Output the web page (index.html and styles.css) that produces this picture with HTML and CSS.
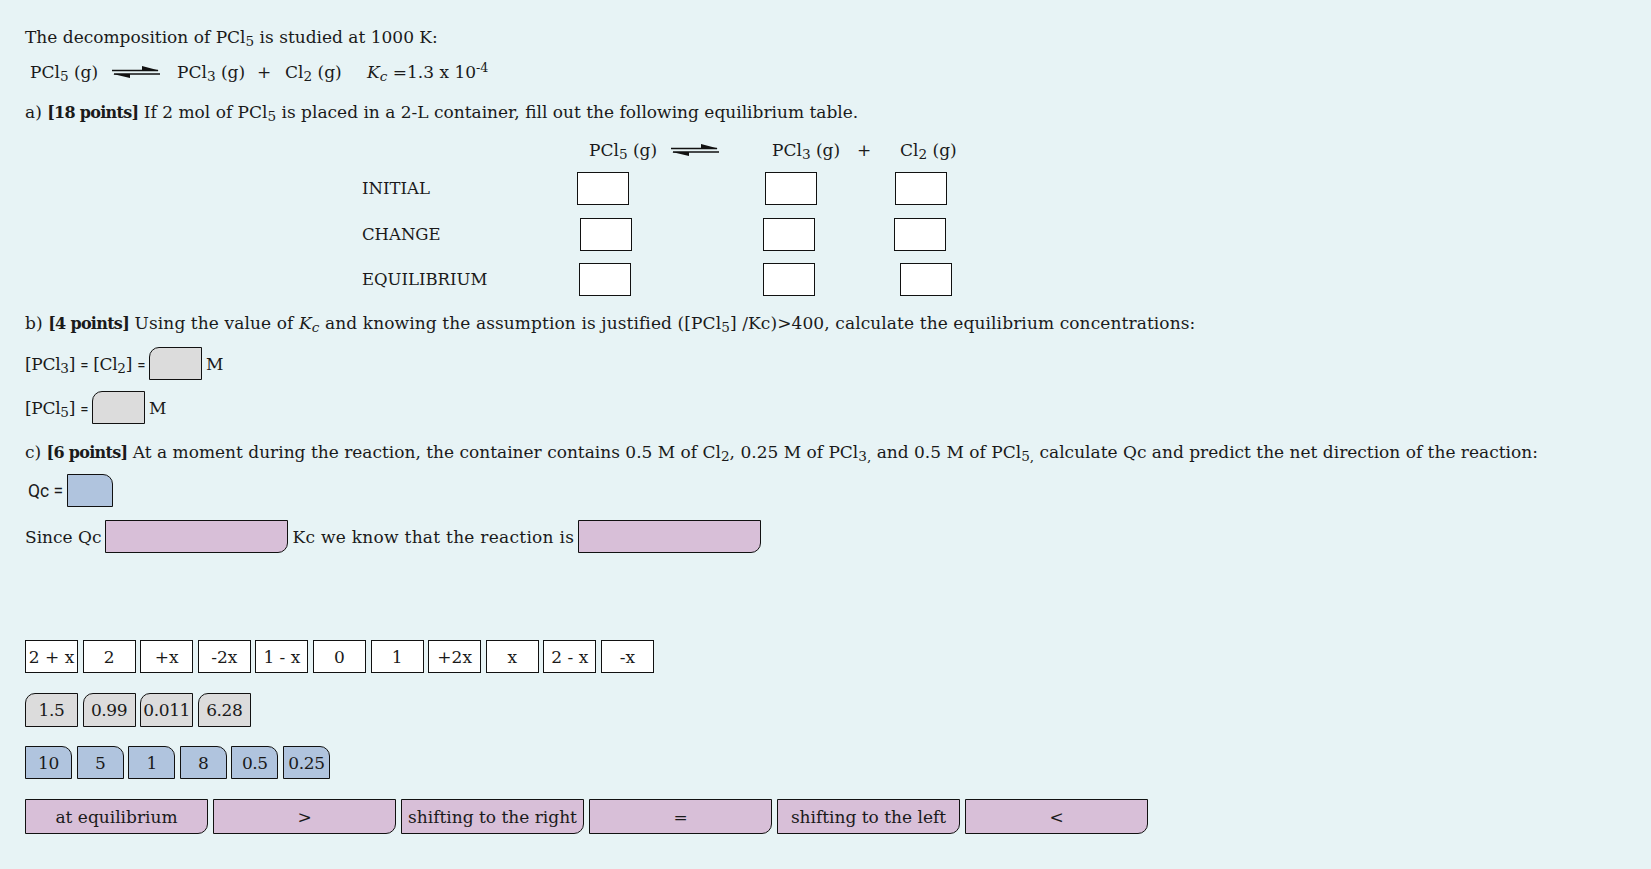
FILE: index.html
```html
<!DOCTYPE html>
<html>
<head>
<meta charset="utf-8">
<link rel="stylesheet" href="styles.css">
</head>
<body>
<div class="page">
  <p class="line l1">The decomposition of PCl<sub>5</sub> is studied at 1000 K:</p>
  <div class="line eq">
    <span class="eq-a">PCl<sub>5</sub> (g)</span>
    <svg class="arrow" width="48" height="14" viewBox="0 0 48 14"><path d="M0 5.5 H46" stroke="#111" stroke-width="1.3"/><path d="M30 1 L47 5.5 L30 5.5 Z" fill="#111"/><path d="M2 9 H48" stroke="#111" stroke-width="1.3"/><path d="M18 13 L1 9 L18 9 Z" fill="#111"/></svg>
    <span class="eq-b">PCl<sub>3</sub> (g)</span>
    <span class="eq-plus">+</span>
    <span class="eq-c">Cl<sub>2</sub> (g)</span>
    <span class="eq-k"><i>K<sub>c</sub></i> =1.3 x 10<sup>-4</sup></span>
  </div>
  <p class="line la">a) <b>[18 points]</b> If 2 mol of PCl<sub>5</sub> is placed in a 2-L container, fill out the following equilibrium table.</p>

  <div class="table">
    <div class="thead">
      <span class="h1">PCl<sub>5</sub> (g)</span>
      <svg class="arrow" width="48" height="14" viewBox="0 0 48 14"><path d="M0 5.5 H46" stroke="#111" stroke-width="1.3"/><path d="M30 1 L47 5.5 L30 5.5 Z" fill="#111"/><path d="M2 9 H48" stroke="#111" stroke-width="1.3"/><path d="M18 13 L1 9 L18 9 Z" fill="#111"/></svg>
      <span class="h2">PCl<sub>3</sub> (g)</span>
      <span class="h3">+</span>
      <span class="h4">Cl<sub>2</sub> (g)</span>
    </div>
    <div class="trow r1">
      <span class="tlabel">INITIAL</span>
      <span class="cell c1"></span><span class="cell c2"></span><span class="cell c3"></span>
    </div>
    <div class="trow r2">
      <span class="tlabel">CHANGE</span>
      <span class="cell c1"></span><span class="cell c2"></span><span class="cell c3"></span>
    </div>
    <div class="trow r3">
      <span class="tlabel">EQUILIBRIUM</span>
      <span class="cell c1"></span><span class="cell c2"></span><span class="cell c3"></span>
    </div>
  </div>

  <p class="line lb">b) <b>[4 points]</b> Using the value of <i>K<sub>c</sub></i> and knowing the assumption is justified ([PCl<sub>5</sub>] /Kc)&gt;400, calculate the equilibrium concentrations:</p>
  <div class="arow ab1"><span class="conc">[PCl<sub>3</sub>] <span class="sans">=</span> [Cl<sub>2</sub>] <span class="sans">=</span></span><span class="drop gray"></span><span class="unit">M</span></div>
  <div class="arow ab2"><span class="conc">[PCl<sub>5</sub>] <span class="sans">=</span></span><span class="drop gray"></span><span class="unit">M</span></div>

  <p class="line lc">c) <b>[6 points]</b> At a moment during the reaction, the container contains 0.5 M of Cl<sub>2</sub>, 0.25 M of PCl<sub>3,</sub> and 0.5 M of PCl<sub>5,</sub> calculate Qc and predict the net direction of the reaction:</p>
  <div class="arow aq"><span class="sans qc">Qc =</span><span class="drop blue"></span></div>
  <div class="arow as"><span>Since Qc</span><span class="drop pink wide"></span><span class="kc-text">Kc we know that the reaction is</span><span class="drop pink wide"></span></div>

  <div class="bank bank1">
    <span class="tile">2 + x</span><span class="tile">2</span><span class="tile">+x</span><span class="tile">-2x</span><span class="tile">1 - x</span><span class="tile">0</span><span class="tile">1</span><span class="tile">+2x</span><span class="tile">x</span><span class="tile">2 - x</span><span class="tile">-x</span>
  </div>
  <div class="bank bank2">
    <span class="tile">1.5</span><span class="tile">0.99</span><span class="tile">0.011</span><span class="tile">6.28</span>
  </div>
  <div class="bank bank3">
    <span class="tile">10</span><span class="tile">5</span><span class="tile">1</span><span class="tile">8</span><span class="tile">0.5</span><span class="tile">0.25</span>
  </div>
  <div class="bank bank4">
    <span class="tile">at equilibrium</span><span class="tile">&gt;</span><span class="tile">shifting to the right</span><span class="tile">=</span><span class="tile">shifting to the left</span><span class="tile">&lt;</span>
  </div>
</div>
</body>
</html>
```
FILE: styles.css
```css
html, body {
  margin: 0;
  padding: 0;
  background: #e7f3f5;
}
.page {
  padding: 25px 0 0 25px;
  font-family: "DejaVu Serif", serif;
  font-size: 17px;
  color: #1a1a1a;
  min-height: 844px;
}
sub {
  font-size: 0.8em;
  vertical-align: -0.25em;
  line-height: 0;
}
sup {
  font-size: 0.75em;
  vertical-align: 0.45em;
  line-height: 0;
}
b {
  font-weight: bold;
  font-size: 16px;
  letter-spacing: -0.7px;
}
.line {
  margin: 0;
  height: 24px;
  line-height: 24px;
  white-space: nowrap;
}
.eq {
  margin-top: 11px;
  display: flex;
  align-items: center;
  padding-left: 5px;
}
.eq-a { width: 82px; }
.eq .arrow { margin-right: 17px; }
.eq-b { width: 80px; }
.eq-plus { width: 28px; }
.eq-c { width: 82px; }
.la { margin-top: 16px; }

.table {
  margin-left: 337px;
}
.thead {
  margin-top: 14px;
  height: 24px;
  display: flex;
  align-items: center;
}
.h1 { margin-left: 227px; width: 82px; }
.thead .arrow { margin-right: 53px; }
.h2 { width: 85px; }
.h3 { width: 43px; }
.trow {
  display: flex;
  align-items: center;
  height: 33px;
}
.r1 { margin-top: 10px; }
.r2 { margin-top: 13px; }
.r3 { margin-top: 12px; }
.tlabel { width: 215px; font-size: 16.5px; }
.cell {
  width: 50px;
  height: 31px;
  background: #fff;
  border: 1px solid #111;
}
.r1 .c1 { margin-left: 0; }
.r1 .c2 { margin-left: 136px; }
.r1 .c3 { margin-left: 78px; }
.r2 .c1 { margin-left: 3px; }
.r2 .c2 { margin-left: 131px; }
.r2 .c3 { margin-left: 79px; }
.r3 .c1 { margin-left: 2px; }
.r3 .c2 { margin-left: 132px; }
.r3 .c3 { margin-left: 85px; }

.lb { margin-top: 15px; letter-spacing: 0.1px; }
.arow {
  display: flex;
  align-items: center;
  height: 33px;
  white-space: nowrap;
}
.ab1 { margin-top: 12px; }
.ab2 { margin-top: 11px; }
.conc { letter-spacing: -0.3px; }
.sans { font-family: "Roboto", "Liberation Sans", sans-serif; font-size: 15px; }
.drop {
  display: inline-block;
  height: 31px;
  border: 1px solid #111;
  margin: 0 4px;
}
.gray {
  width: 51px;
  background: #dcdcdc;
  border-top-left-radius: 10px;
}
.blue {
  width: 44px;
  background: #b0c4de;
  border-top-right-radius: 10px;
}
.pink {
  background: #d8bfd8;
  border-bottom-right-radius: 10px;
}
.wide { width: 181px; }
.unit { margin-left: 0; }
.lc { margin-top: 16px; }
.aq { margin-top: 10px; padding-left: 3px; }
.sans.qc { font-size: 17.5px; }
.as { margin-top: 13px; }
.kc-text { letter-spacing: 0.27px; }

.bank {
  display: flex;
  gap: 4.6px;
}
.tile {
  box-sizing: border-box;
  border: 1px solid #111;
  display: flex;
  align-items: center;
  justify-content: center;
  white-space: nowrap;
  font-size: 17px;
}
.bank1 { margin-top: 87px; }
.bank1 .tile { width: 53px; height: 33px; background: #fff; }
.bank2 { margin-top: 20px; }
.bank2 .tile { width: 53px; height: 34px; background: #dcdcdc; border-top-left-radius: 10px; letter-spacing: -0.4px; }
.bank3 { margin-top: 19px; }
.bank3 .tile { width: 47px; height: 33px; background: #b0c4de; border-top-right-radius: 10px; letter-spacing: -0.4px; }
.bank4 { margin-top: 20px; gap: 5px; }
.bank4 .tile { width: 183px; height: 35px; background: #d8bfd8; border-bottom-right-radius: 10px; }
```
